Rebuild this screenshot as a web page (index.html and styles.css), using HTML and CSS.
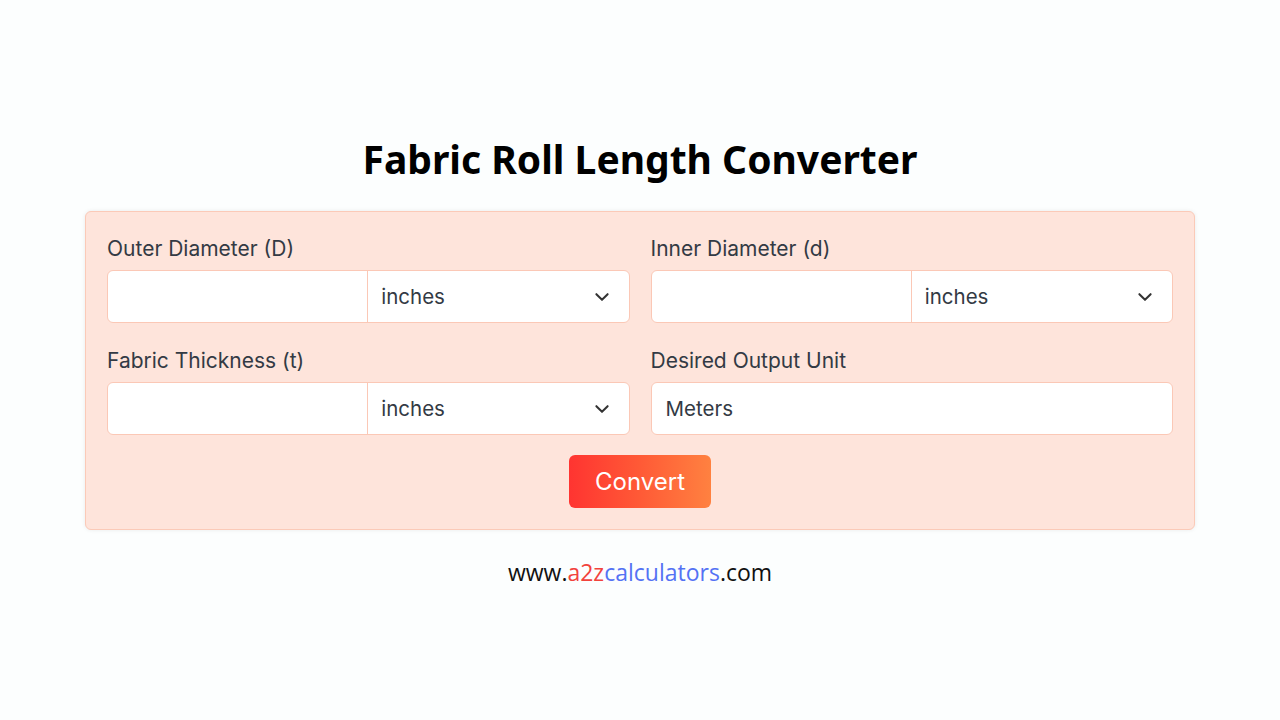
FILE: index.html
```html
<!DOCTYPE html>
<html>
<head>
<meta charset="utf-8">
<link rel="stylesheet" href="styles.css">
</head>
<body>
<main class="page">
  <h1 class="title">Fabric Roll Length Converter</h1>
  <section class="card">
    <div class="grid">
      <div class="field">
        <label class="label">Outer Diameter (D)</label>
        <div class="group">
          <div class="input"></div>
          <div class="select"><span>inches</span><svg class="chev" viewBox="0 0 16 16" width="16" height="16"><path d="M3 5.5l5 5 5-5" fill="none" stroke="#333" stroke-width="1.8" stroke-linecap="round" stroke-linejoin="round"/></svg></div>
        </div>
      </div>
      <div class="field">
        <label class="label">Inner Diameter (d)</label>
        <div class="group">
          <div class="input"></div>
          <div class="select"><span>inches</span><svg class="chev" viewBox="0 0 16 16" width="16" height="16"><path d="M3 5.5l5 5 5-5" fill="none" stroke="#333" stroke-width="1.8" stroke-linecap="round" stroke-linejoin="round"/></svg></div>
        </div>
      </div>
      <div class="field">
        <label class="label">Fabric Thickness (t)</label>
        <div class="group">
          <div class="input"></div>
          <div class="select"><span>inches</span><svg class="chev" viewBox="0 0 16 16" width="16" height="16"><path d="M3 5.5l5 5 5-5" fill="none" stroke="#333" stroke-width="1.8" stroke-linecap="round" stroke-linejoin="round"/></svg></div>
        </div>
      </div>
      <div class="field">
        <label class="label">Desired Output Unit</label>
        <div class="group single">
          <div class="select full"><span>Meters</span></div>
        </div>
      </div>
    </div>
    <div class="actions"><button class="btn">Convert</button></div>
  </section>
  <p class="footer">www.<span class="red">a2z</span><span class="blue">calculators</span>.com</p>
</main>
</body>
</html>
```
FILE: styles.css
```css
html, body {
  margin: 0;
  padding: 0;
  background: #fcfefe;
}
.page {
  width: 1280px;
  height: 720px;
  display: flex;
  flex-direction: column;
  align-items: center;
  font-family: Inter, "Noto Sans", sans-serif;
}
.title {
  margin: 136px 0 0;
  height: 46px;
  line-height: 46px;
  font-family: "Noto Sans", sans-serif;
  font-weight: 700;
  font-size: 39px;
  color: #000;
  letter-spacing: 0;
}
.card {
  margin-top: 29px;
  width: 1110px;
  box-sizing: border-box;
  padding: 21px 21px 21px;
  background: #fee4db;
  border: 1px solid #fbcab8;
  border-radius: 6px;
  box-shadow: 0 0 4px rgba(0,0,0,0.08);
}
.grid {
  display: grid;
  grid-template-columns: 1fr 1fr;
  column-gap: 21px;
  row-gap: 22px;
}
.field {
  display: flex;
  flex-direction: column;
}
.label {
  font-size: 21px;
  line-height: 31px;
  color: #333a44;
  margin-bottom: 6px;
}
.group {
  display: flex;
  height: 53px;
  box-sizing: border-box;
  border: 1px solid #fbc8b6;
  border-radius: 6px;
  background: #fff;
  overflow: hidden;
}
.input {
  width: 50%;
  flex: none;
  box-sizing: border-box;
  border-right: 1px solid #fbc8b6;
}
.select {
  width: 50%;
  flex: none;
  box-sizing: border-box;
  display: flex;
  align-items: center;
  justify-content: space-between;
  padding: 0 18px 0 13px;
  font-size: 20.5px;
  color: #333a44;
}
.select.full {
  width: 100%;
  padding-left: 14px;
}
.chev {
  width: 18px;
  height: 18px;
}
.actions {
  display: flex;
  justify-content: center;
  margin-top: 20px;
}
.btn {
  width: 142px;
  height: 53px;
  border: none;
  border-radius: 6px;
  background: linear-gradient(90deg, #ff3431 0%, #ff5a36 50%, #ff8140 100%);
  color: #fff;
  font-family: Inter, "Noto Sans", sans-serif;
  font-size: 24px;
  padding: 0;
}
.footer {
  margin: 27px 0 0;
  font-family: "Open Sans", sans-serif;
  font-size: 23px;
  line-height: 30px;
  color: #111;
}
.red { color: #f2433c; }
.blue { color: #5472f4; }
```
